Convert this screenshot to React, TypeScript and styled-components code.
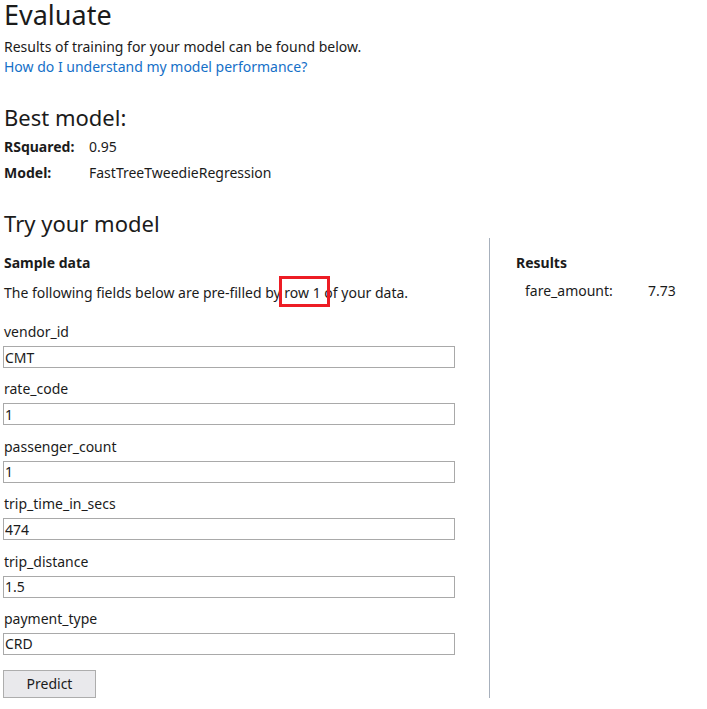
import React from "react";
import styled, { createGlobalStyle } from "styled-components";

const Global = createGlobalStyle`
  html, body { margin: 0; padding: 0; background: #ffffff; }
  body {
    font-family: "Noto Sans", "Open Sans", sans-serif;
    color: #1b1b1b;
    font-size: 14px;
  }
`;

const Page = styled.div`
  padding: 0 0 0 3px;
  width: 704px;
  box-sizing: border-box;
`;

const Title = styled.h1`
  margin: 0;
  font-size: 27px;
  font-weight: 400;
  line-height: 26px;
  padding: 2px 0 0 1px;
`;

const Intro = styled.p`
  margin: 9px 0 0 1px;
  line-height: 20px;
`;

const Link = styled.a`
  display: block;
  color: #1570c8;
  text-decoration: none;
`;

const SectionTitle = styled.h2`
  margin: 26px 0 0 1px;
  font-size: 22px;
  font-weight: 400;
  line-height: 28px;
`;

const Stats = styled.div`
  display: grid;
  grid-template-columns: 85px auto;
  row-gap: 6px;
  margin: 6px 0 0 1px;
  line-height: 20px;
`;

const StatLabel = styled.span`
  font-weight: 700;
`;

const Columns = styled.div`
  display: grid;
  grid-template-columns: 487px 1fr;
  margin-top: 1px;
`;

const Left = styled.div`
  border-right: 1px solid #a7b0bc;
  padding-top: 15px;
`;

const Right = styled.div`
  padding: 15px 0 0 25px;
`;

const SubHead = styled.div`
  font-weight: 700;
  line-height: 20px;
  padding-left: 1px;
`;

const Note = styled.p`
  margin: 10px 0 0 1px;
  line-height: 20px;
`;

/* red marker drawn around the row reference */
const Highlight = styled.span`
  position: relative;
  &::after {
    content: "";
    position: absolute;
    left: -5px;
    right: -9px;
    top: -7px;
    bottom: -5px;
    border: 3px solid #ed1c24;
    pointer-events: none;
  }
`;

const Field = styled.div`
  margin-top: 19px;
  & + & {
    margin-top: 11.4px;
  }
`;

const Label = styled.label`
  display: block;
  line-height: 20px;
  padding-left: 1px;
`;

const Input = styled.input`
  display: block;
  box-sizing: border-box;
  width: 452px;
  height: 22px;
  margin-top: 4px;
  padding: 0 1px;
  border: 1px solid #a9a9a9;
  border-radius: 0;
  font: inherit;
  color: #1b1b1b;
  background: #ffffff;
  outline: none;
`;

const Button = styled.button`
  display: block;
  box-sizing: border-box;
  width: 93px;
  height: 28px;
  margin-top: 15px;
  border: 1px solid #adadad;
  background: #e9e9ec;
  border-radius: 0;
  font: inherit;
  color: #1b1b1b;
  padding: 0;
`;

const ResultRow = styled.div`
  display: grid;
  grid-template-columns: 123px auto;
  margin-top: 8px;
  padding-left: 10px;
  line-height: 20px;
`;

const fields: [string, string][] = [
  ["vendor_id", "CMT"],
  ["rate_code", "1"],
  ["passenger_count", "1"],
  ["trip_time_in_secs", "474"],
  ["trip_distance", "1.5"],
  ["payment_type", "CRD"],
];

export default function App() {
  return (
    <Page>
      <Global />
      <Title>Evaluate</Title>
      <Intro>
        Results of training for your model can be found below.
        <Link href="#">How do I understand my model performance?</Link>
      </Intro>

      <SectionTitle>Best model:</SectionTitle>
      <Stats>
        <StatLabel>RSquared:</StatLabel>
        <span>0.95</span>
        <StatLabel>Model:</StatLabel>
        <span>FastTreeTweedieRegression</span>
      </Stats>

      <SectionTitle>Try your model</SectionTitle>
      <Columns>
        <Left>
          <SubHead>Sample data</SubHead>
          <Note>
            The following fields below are pre-filled by <Highlight>row 1</Highlight> of your data.
          </Note>
          {fields.map(([name, value]) => (
            <Field key={name}>
              <Label>{name}</Label>
              <Input defaultValue={value} readOnly />
            </Field>
          ))}
          <Button>Predict</Button>
        </Left>
        <Right>
          <SubHead>Results</SubHead>
          <ResultRow>
            <span>fare_amount:</span>
            <span>7.73</span>
          </ResultRow>
        </Right>
      </Columns>
    </Page>
  );
}
